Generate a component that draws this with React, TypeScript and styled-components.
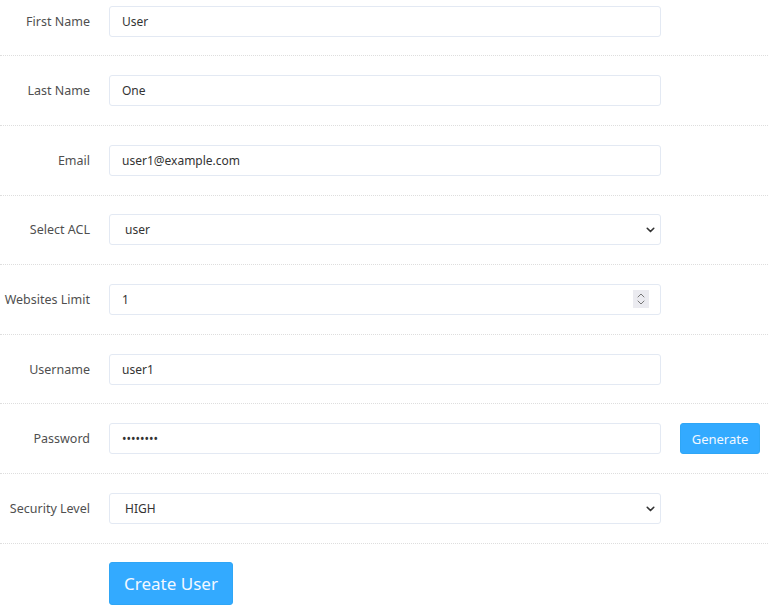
import styled, { createGlobalStyle } from "styled-components"

const GlobalStyle = createGlobalStyle`
  html, body {
    margin: 0;
    padding: 0;
    background: #fff;
    font-family: "Noto Sans", "Open Sans", sans-serif;
  }
  * { box-sizing: border-box; }
`

type Field = {
    label: string;
    kind: "text" | "select" | "number" | "password";
    value: string;
    options?: string[];
}

const fields: Field[] = [
    { label: "First Name", kind: "text", value: "User" },
    { label: "Last Name", kind: "text", value: "One" },
    { label: "Email", kind: "text", value: "user1@example.com" },
    { label: "Select ACL", kind: "select", value: "user", options: ["admin", "reseller", "user"] },
    { label: "Websites Limit", kind: "number", value: "1" },
    { label: "Username", kind: "text", value: "user1" },
    { label: "Password", kind: "password", value: "password" },
    { label: "Security Level", kind: "select", value: "HIGH", options: ["HIGH", "LOW"] },
]

export default function App() {
    return (
        <>
            <GlobalStyle />
            <Form onSubmit={(e) => e.preventDefault()}>
                {fields.map((f, i) => (
                    <Row key={f.label} $first={i === 0}>
                        <Label>{f.label}</Label>
                        {f.kind === "select" ? (
                            <FieldWrap>
                                <Select defaultValue={f.value}>
                                    {f.options?.map((o) => <option key={o} value={o}>{o}</option>)}
                                </Select>
                                <Chevron viewBox="0 0 16 16" aria-hidden="true">
                                    <path d="M4 6.5l4 4 4-4" fill="none" stroke="#333" strokeWidth="2" strokeLinecap="round" strokeLinejoin="round" />
                                </Chevron>
                            </FieldWrap>
                        ) : f.kind === "number" ? (
                            <FieldWrap>
                                <Input type="text" defaultValue={f.value} />
                                <Spinner aria-hidden="true">
                                    <svg viewBox="0 0 16 20" width="16" height="20">
                                        <path d="M5 8l3-3 3 3" fill="none" stroke="#777" strokeWidth="1" strokeLinecap="round" />
                                        <path d="M5 12l3 3 3-3" fill="none" stroke="#777" strokeWidth="1" strokeLinecap="round" />
                                    </svg>
                                </Spinner>
                            </FieldWrap>
                        ) : (
                            <Input type={f.kind} defaultValue={f.value} />
                        )}
                        {f.kind === "password" && <SmallButton type="button">Generate</SmallButton>}
                    </Row>
                ))}
                <Actions>
                    <BigButton type="submit">Create User</BigButton>
                </Actions>
            </Form>
        </>
    )
}

const Form = styled.form`
    width: 768px;
    display: flex;
    flex-direction: column;
`

const Row = styled.div<{ $first?: boolean }>`
    display: grid;
    grid-template-columns: 90px 552px 80px;
    column-gap: 19px;
    align-items: center;
    padding: ${(p) => (p.$first ? "5.6px" : "18.8px")} 0 18.8px;
    border-bottom: 1px dotted #dedede;
`

const Label = styled.label`
    text-align: right;
    font-size: 12.5px;
    color: #4f4f4f;
    white-space: nowrap;
`

const Input = styled.input`
    width: 100%;
    height: 31px;
    border: 1px solid #e3e9f3;
    border-radius: 3px;
    padding: 0 12px;
    font-family: inherit;
    font-size: 12px;
    color: #333;
    background: #fff;
    outline: none;
`

const FieldWrap = styled.div`
    position: relative;
    width: 100%;
`

const Select = styled.select`
    width: 100%;
    height: 31px;
    border: 1px solid #e3e9f3;
    border-radius: 3px;
    padding: 0 15px;
    font-family: inherit;
    font-size: 12px;
    color: #333;
    background: #fff;
    appearance: none;
    outline: none;
`

const Chevron = styled.svg`
    position: absolute;
    right: 4px;
    top: 9px;
    width: 13px;
    height: 13px;
    pointer-events: none;
`

const Spinner = styled.div`
    position: absolute;
    right: 12px;
    top: 6px;
    width: 16px;
    height: 18px;
    background: #ebebf0;
    display: flex;
    align-items: center;
    justify-content: center;
    overflow: hidden;
    pointer-events: none;
`

const SmallButton = styled.button`
    height: 31px;
    width: 80px;
    border: 1px solid #2fa6f6;
    border-radius: 3px;
    background: #33aaff;
    color: #f2f8ff;
    font-family: inherit;
    font-size: 13px;
    padding: 0;
    cursor: pointer;
`

const Actions = styled.div`
    padding: 18.6px 0 0 109px;
`

const BigButton = styled.button`
    height: 43px;
    width: 124px;
    border: 1px solid #2fa6f6;
    border-radius: 3px;
    background: #33aaff;
    color: #f2f8ff;
    font-family: inherit;
    font-size: 17px;
    padding: 0;
    cursor: pointer;
`
